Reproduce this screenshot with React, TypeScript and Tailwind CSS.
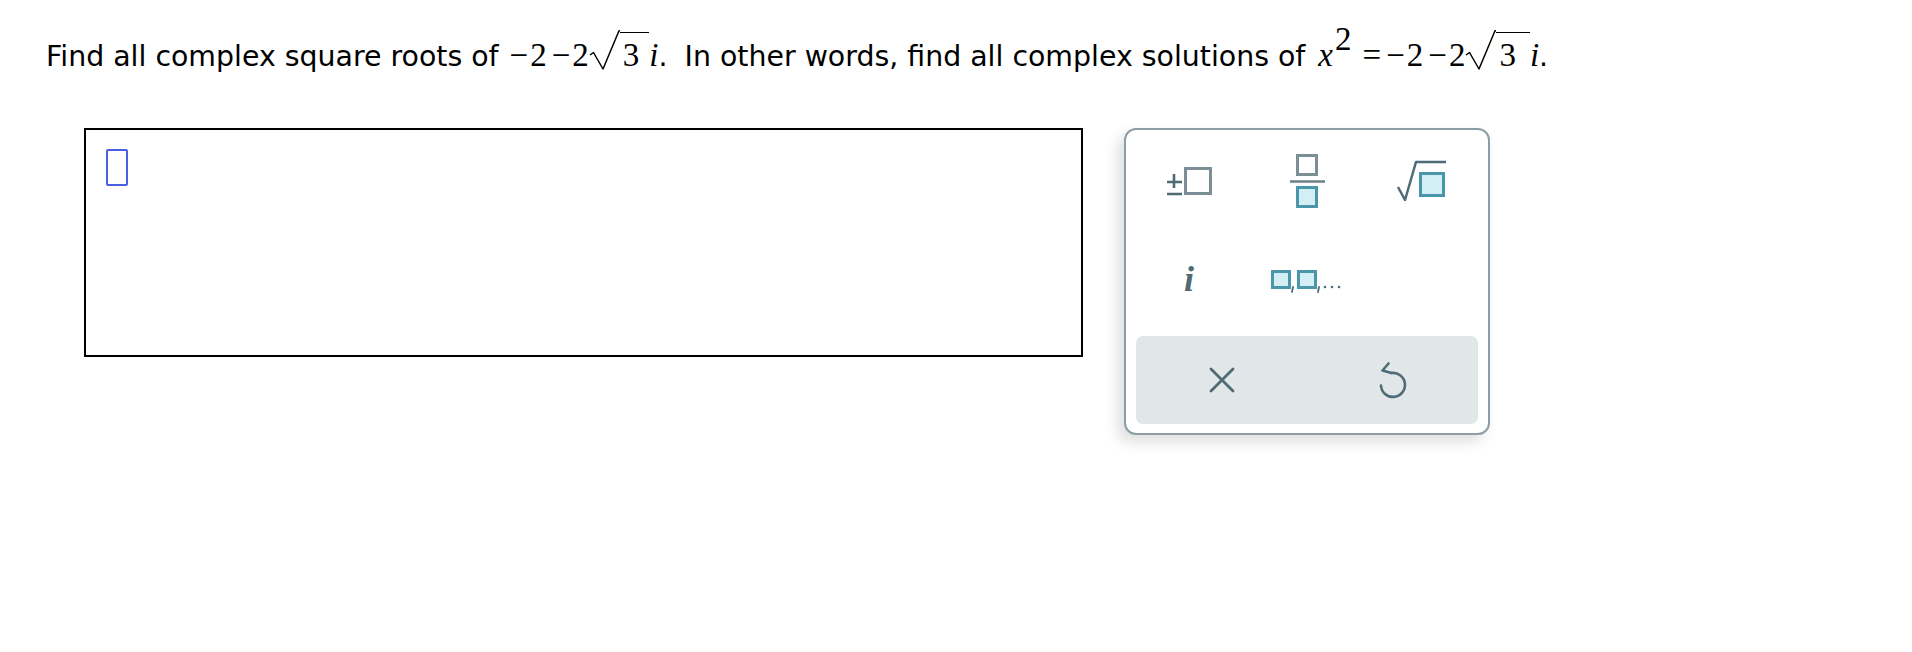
import React from 'react';

const ink = '#4f6b76';
const boxGray = '#7c8e96';
const teal = '#4a97ac';
const tealFill = '#d3eef4';
const serif = '"Liberation Serif", "Times New Roman", serif';

function Radical({ children, tail }: { children: React.ReactNode; tail: string }) {
  return (
    <span className="whitespace-nowrap">
      <svg width="31" height="41" viewBox="0 0 31 41" className="inline-block align-[-5px]">
        <path d="M1 25 L4.5 22.5 L14 39 L30 0.8 H31" fill="none" stroke="#000" strokeWidth="1.5" strokeLinejoin="round" />
      </svg>
      <span className={`inline-block leading-[33px] border-t-[1.5px] border-black pt-[6px] pl-[3px] ${tail}`}>
        {children}
      </span>
    </span>
  );
}

function Expr({ tail }: { tail: string }) {
  return (
    <>
      <span>−</span>
      <span className="ml-[2px]">2</span>
      <span className="ml-[5px] mr-[2px]">−</span>
      <span>2</span>
      <Radical tail={tail}>3</Radical>
      <span className="italic">i</span>
    </>
  );
}

function PlusMinusBox() {
  return (
    <svg width="46" height="29" viewBox="0 0 46 29">
      <path d="M7 7 V21 M0 15 H15 M0 27 H15" stroke={ink} strokeWidth="2.6" fill="none" />
      <rect x="18.5" y="1.5" width="25" height="25" fill="#fff" stroke={boxGray} strokeWidth="3" />
    </svg>
  );
}

function FractionBox() {
  return (
    <svg width="35" height="54" viewBox="0 0 35 54">
      <rect x="7.5" y="1.5" width="19" height="19" fill="#fff" stroke={boxGray} strokeWidth="3" />
      <path d="M0 27.5 H35" stroke="#6d8089" strokeWidth="2.5" />
      <rect x="7.5" y="33.5" width="19" height="19" fill={tealFill} stroke={teal} strokeWidth="3" />
    </svg>
  );
}

function SqrtBox() {
  return (
    <svg width="51" height="42" viewBox="0 0 51 42">
      <path d="M2 27 L9 40 L20 2 H50" fill="none" stroke={ink} strokeWidth="2.5" strokeLinejoin="round" />
      <rect x="24.5" y="13.5" width="23" height="22" fill={tealFill} stroke={teal} strokeWidth="3" />
    </svg>
  );
}

function ListBox() {
  return (
    <svg width="72" height="25" viewBox="0 0 72 25">
      <rect x="1.5" y="1.5" width="17" height="16" fill={tealFill} stroke={teal} strokeWidth="3" />
      <path d="M22 17 L21 22" stroke={ink} strokeWidth="1.8" strokeLinecap="round" />
      <rect x="27.5" y="1.5" width="17" height="16" fill={tealFill} stroke={teal} strokeWidth="3" />
      <path d="M48 17 L47 22" stroke={ink} strokeWidth="1.8" strokeLinecap="round" />
      <circle cx="54" cy="17" r="1.3" fill={ink} />
      <circle cx="61" cy="17" r="1.3" fill={ink} />
      <circle cx="68" cy="17" r="1.3" fill={ink} />
    </svg>
  );
}

function CloseIcon() {
  return (
    <svg width="26" height="26" viewBox="0 0 26 26">
      <path d="M2 2 L24 24 M24 2 L2 24" stroke={ink} strokeWidth="2.8" strokeLinecap="round" />
    </svg>
  );
}

function UndoIcon() {
  return (
    <svg width="28" height="37" viewBox="0 0 28 37">
      <path d="M9.5 1.5 L3.5 8.5 L12.5 11" fill="none" stroke={ink} strokeWidth="2.6" strokeLinecap="round" strokeLinejoin="round" />
      <path d="M12.5 11 A12 12 0 1 1 2 23.5" fill="none" stroke={ink} strokeWidth="2.6" strokeLinecap="round" />
    </svg>
  );
}

export default function App() {
  return (
    <div className="min-h-screen bg-white text-black" style={{ fontFamily: '"DejaVu Sans", Verdana, sans-serif' }}>
      <div className="h-[128px] pl-[46px] pt-[15px]">
        <p className="text-[28.4px] leading-[80px] whitespace-nowrap">
          Find all complex square roots of{' '}
          <span className="text-[33px] ml-[2px]" style={{ fontFamily: serif }}>
            <Expr tail="pr-[10px]" />
          </span>
          .<span className="ml-[8px]"> In other words, find all complex solutions of </span>
          <span className="text-[33px] ml-[4px]" style={{ fontFamily: serif }}>
            <span className="italic">x</span>
            <span className="inline-block leading-none align-[16px] ml-[2px]">2</span>
            <span className="ml-[11px] mr-[5px]">=</span>
            <Expr tail="pr-[14px]" />
          </span>
          .
        </p>
      </div>

      <div className="flex items-start pl-[84px] gap-[41px]">
        <div className="w-[999px] h-[229px] border-2 border-black pl-[20px] pt-[19px]">
          <div className="w-[22px] h-[37px] border-2 border-[#4a60e3] rounded-[2px]" />
        </div>

        <div className="w-[366px] h-[307px] border-2 border-[#8d9da5] rounded-[12px] bg-white shadow-[-6px_7px_14px_rgba(0,0,0,0.13)] px-[10px] pt-[2px] pb-[9px] flex flex-col">
          <div className="grid grid-cols-3 grid-rows-[98px_98px] items-center justify-items-center">
            <button className="flex items-center justify-center pr-[7px]"><PlusMinusBox /></button>
            <button className="flex items-center justify-center"><FractionBox /></button>
            <button className="flex items-center justify-center"><SqrtBox /></button>
            <button
              className="flex items-center justify-center pr-[8px] text-[36px] leading-none font-bold italic text-[#4f6b76]"
              style={{ fontFamily: serif }}
            >
              i
            </button>
            <button className="flex items-center justify-center pt-[6px]"><ListBox /></button>
            <div />
          </div>
          <div className="mt-[8px] h-[88px] rounded-[7px] bg-[#e1e6e9] grid grid-cols-2 items-center justify-items-center">
            <button className="flex items-center justify-center"><CloseIcon /></button>
            <button className="flex items-center justify-center"><UndoIcon /></button>
          </div>
        </div>
      </div>
    </div>
  );
}
